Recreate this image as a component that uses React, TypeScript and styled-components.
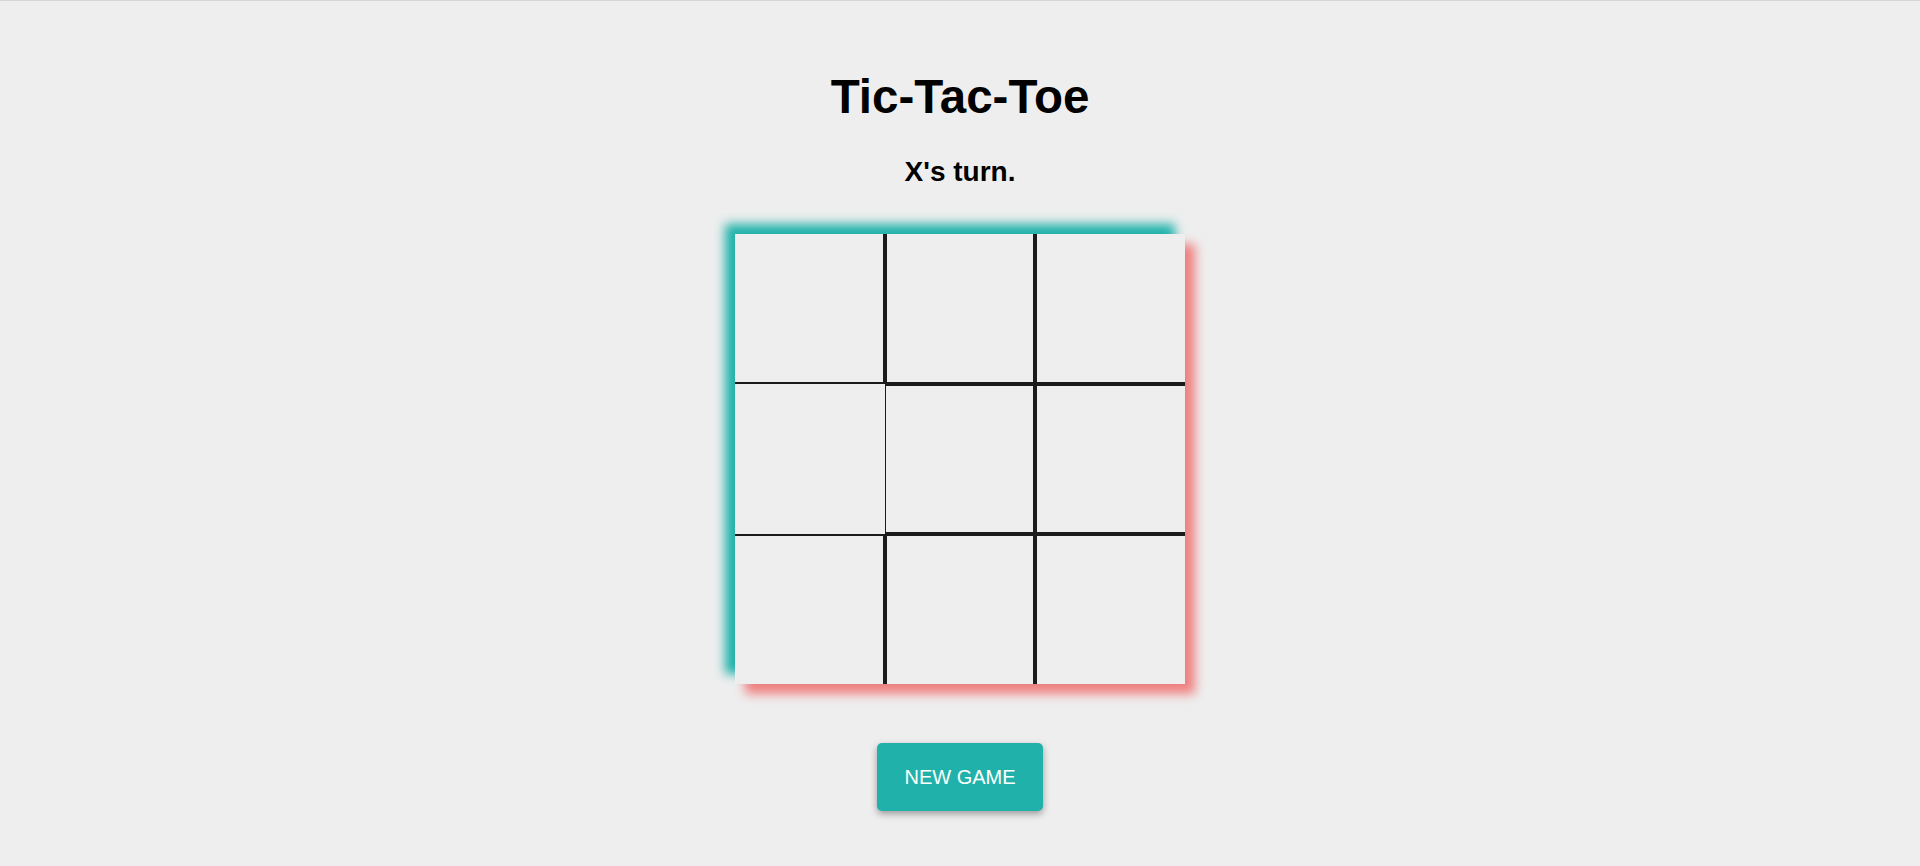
import React from "react";
import styled, { createGlobalStyle } from "styled-components";

const Global = createGlobalStyle`
  html, body { margin: 0; padding: 0; }
  body {
    background: #eeeeee;
    border-top: 1px solid #d6d6d6;
    font-family: "Liberation Sans", Arial, sans-serif;
    min-height: 865px;
  }
`;

const Page = styled.main`
  display: flex;
  flex-direction: column;
  align-items: center;
  padding-top: 68px;
`;

const Title = styled.h1`
  margin: 0;
  font-size: 47.5px;
  line-height: 56px;
  font-weight: 700;
  color: #000;
`;

const Status = styled.h2`
  margin: 31px 0 0;
  font-size: 28px;
  line-height: 32px;
  font-weight: 700;
  color: #000;
`;

const Board = styled.div`
  margin-top: 46px;
  display: grid;
  grid-template-columns: repeat(3, 150px);
  grid-template-rows: repeat(3, 150px);
  box-shadow: -10px -10px 10px #20b2aa, 10px 10px 10px #f08080;
  background: #eeeeee;
`;

type Sides = { t: number; r: number; b: number; l: number };

const Cell = styled.div<{ $s: Sides }>`
  box-sizing: border-box;
  background: #eeeeee;
  border-style: solid;
  border-color: #1b1b1b;
  border-width: ${(p) => `${p.$s.t}px ${p.$s.r}px ${p.$s.b}px ${p.$s.l}px`};
`;

const NewGame = styled.button`
  margin-top: 59px;
  width: 166px;
  height: 68px;
  border: none;
  border-radius: 5px;
  background: #20b2aa;
  color: #ffffff;
  font-family: "Liberation Sans", Arial, sans-serif;
  font-size: 20px;
  box-shadow: 0 3px 7px rgba(0, 0, 0, 0.35);
  cursor: pointer;
`;

const cells: Sides[] = [
  { t: 0, r: 2, b: 2, l: 0 },
  { t: 0, r: 2, b: 2, l: 2 },
  { t: 0, r: 0, b: 2, l: 2 },
  { t: 0, r: 0, b: 0, l: 0 },
  { t: 2, r: 2, b: 2, l: 1 },
  { t: 2, r: 0, b: 2, l: 2 },
  { t: 2, r: 2, b: 0, l: 0 },
  { t: 2, r: 2, b: 0, l: 2 },
  { t: 2, r: 0, b: 0, l: 2 },
];

export default function App() {
  return (
    <>
      <Global />
      <Page>
        <Title>Tic-Tac-Toe</Title>
        <Status>X's turn.</Status>
        <Board>
          {cells.map((s, i) => (
            <Cell key={i} $s={s} />
          ))}
        </Board>
        <NewGame>NEW GAME</NewGame>
      </Page>
    </>
  );
}
